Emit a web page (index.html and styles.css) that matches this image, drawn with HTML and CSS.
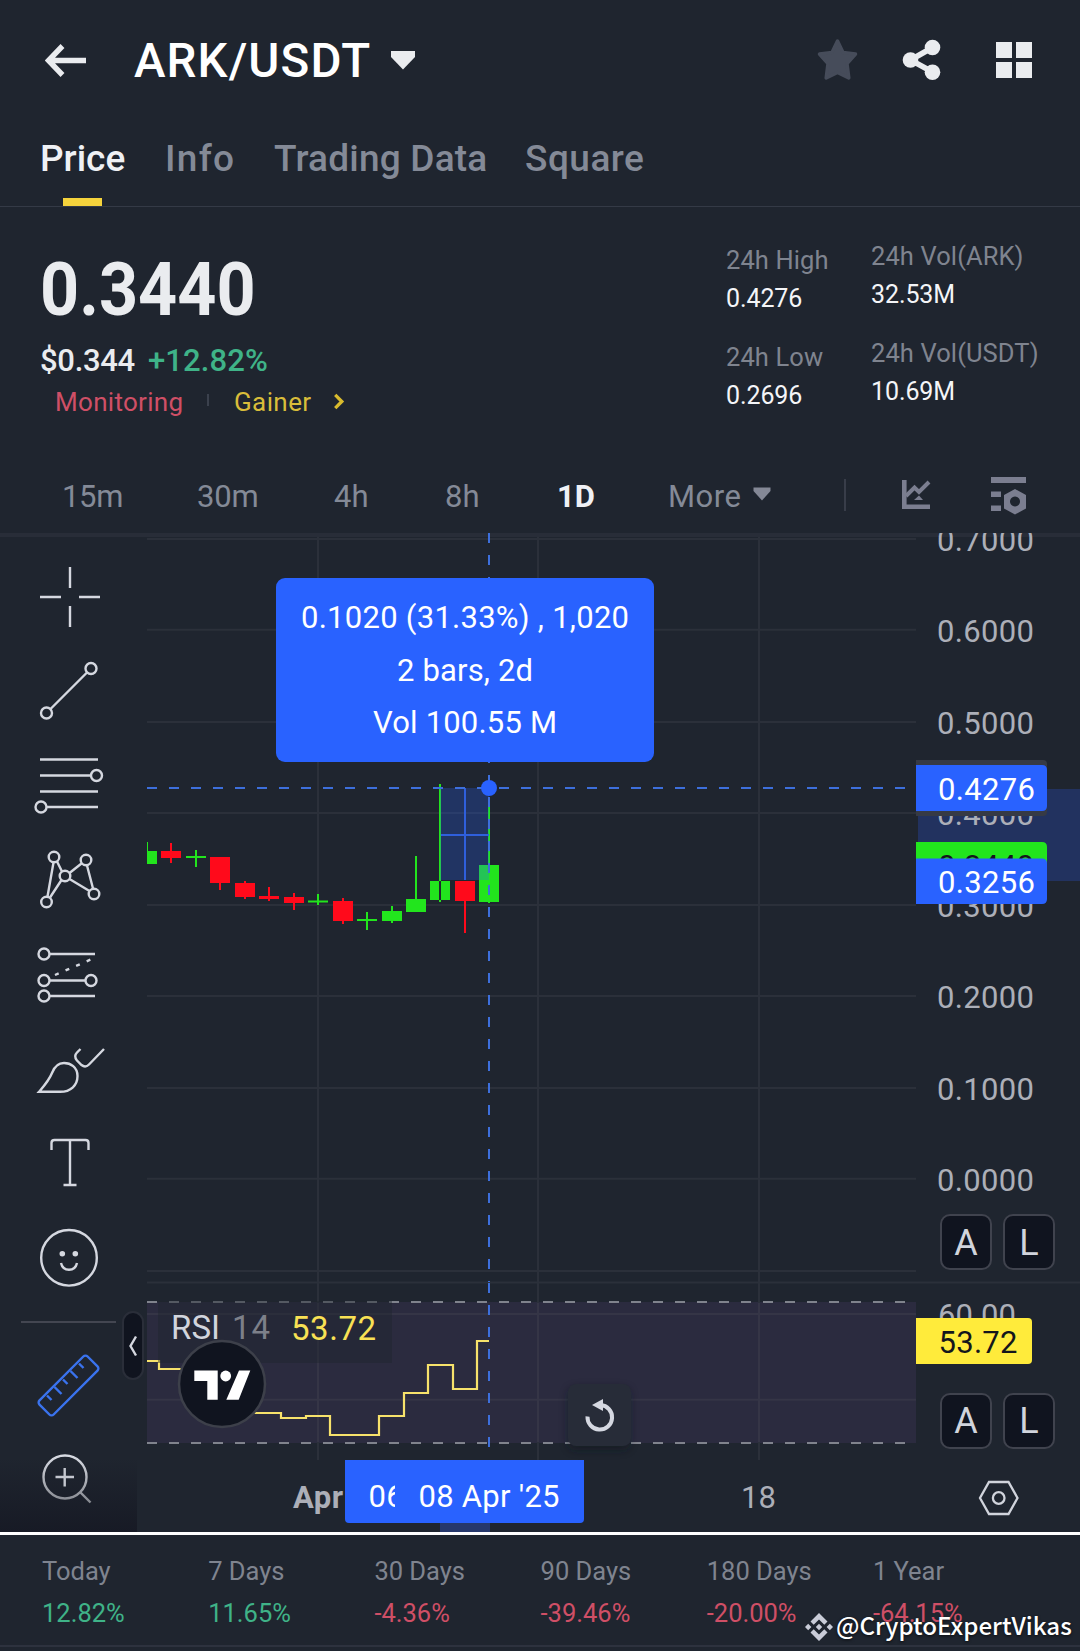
FILE: index.html
```html
<!DOCTYPE html>
<html lang="en">
<head>
<meta charset="utf-8">
<title>ARK/USDT</title>
<link rel="stylesheet" href="styles.css">
</head>
<body>
<div class="app">
  <header class="header">
    <svg class="back" width="42" height="36" viewBox="45 43 42 36"><path d="M86 61.500H50M62.500 47L48.500 61.500l14 14.500" fill="none" stroke="#eaecef" stroke-width="5.400"/></svg>
    <h1 class="pair">ARK/USDT</h1>
    <svg class="pair-caret" width="26" height="20" viewBox="0 0 26 20"><path d="M1 1h24v6L13 19.500 1 7z" fill="#eaecef"/></svg>
    <svg class="star" width="42" height="44" viewBox="816 40 42 44"><path d="M837.500 43l5.500 11.500 12.500 1.500-8.500 9.500 1.800 14.500-11.300-5.500-11.300 5.500 1.800-14.500-8.500-9.500 12.500-1.500z" fill="#464c5a" stroke="#464c5a" stroke-width="3.500" stroke-linejoin="round"/></svg>
    <svg class="share" width="40" height="44" viewBox="901 40 40 44"><path d="M932.500 49.500L910.500 62l22 12" fill="none" stroke="#eaecef" stroke-width="5.500"/><circle cx="932.500" cy="49.500" r="7.800"/><circle cx="910.500" cy="62" r="7.800"/><circle cx="932.500" cy="74.300" r="7.800"/></svg>
    <svg class="grid-icon" width="38" height="38" viewBox="0 0 38 38"><path d="M1 1h16v16H1zM21 1h16v16H21zM1 21h16v16H1zM21 21h16v16H21z"/></svg>
  </header>

  <nav class="tabs">
    <a class="tab tab-active">Price</a>
    <a class="tab tab-info">Info</a>
    <a class="tab tab-trading">Trading Data</a>
    <a class="tab tab-square">Square</a>
  </nav>

  <section class="summary">
    <div class="quote">
      <div class="last"><span class="last-value">0.3440</span></div>
      <div class="change"><span class="fiat">$0.344</span><span class="pct">+12.82%</span></div>
      <div class="tags"><span class="tag-monitoring">Monitoring</span><i class="tag-sep"></i><span class="tag-gainer">Gainer</span>
        <svg width="12" height="17" viewBox="0 0 12 18"><path d="M2 2l7 7-7 7" fill="none" stroke="#d9bb2e" stroke-width="3.500"/></svg></div>
    </div>
    <dl class="stats stats-range">
      <dt>24h High</dt><dd>0.4276</dd>
      <dt>24h Low</dt><dd>0.2696</dd>
    </dl>
    <dl class="stats stats-volume">
      <dt>24h Vol(ARK)</dt><dd>32.53M</dd>
      <dt>24h Vol(USDT)</dt><dd>10.69M</dd>
    </dl>
  </section>

  <nav class="intervals">
    <span class="iv iv-15m">15m</span>
    <span class="iv iv-30m">30m</span>
    <span class="iv iv-4h">4h</span>
    <span class="iv iv-8h">8h</span>
    <span class="iv iv-1d">1D</span>
    <span class="iv iv-more">More</span>
    <svg class="more-caret" width="18" height="14" viewBox="0 0 18 14"><path d="M.500.500h17V4L9 13.500.500 4z" fill="#848896"/></svg>
    <i class="iv-sep"></i>
    <svg class="iv-line" width="30" height="32" viewBox="901 487 30 32"><path d="M904.300 488v26.700H930" fill="none" stroke="#7b7e90" stroke-width="4.600"/><path d="M906 504l8.500-8.500 4.500 4.500 10-10" fill="none" stroke="#7b7e90" stroke-width="4"/><path d="M914 508l5-4.500 4 4.500z" fill="#7b7e90"/></svg>
    <svg class="iv-settings" width="38" height="40" viewBox="990 483 38 40"><path d="M991 485h35v6h-35zM991 499.500h10v5.500h-10zM991 513.500h10v5.500h-10z" fill="#7b7e90"/><path fill-rule="evenodd" d="M1015 497l11 6v13.500l-11 6-11-6V503zM1015 504.500a5 5 0 1 0 .01 0z" fill="#7b7e90"/></svg>
  </nav>

  <main class="workspace">
    <aside class="tools">
      <svg width="140" height="108" viewBox="0 537 140 108"><path d="M40 597h21M79 597h21M70 567v21M70 606v21"/></svg>
      <svg width="140" height="90" viewBox="0 645 140 90"><circle cx="91" cy="668.500" r="5.500"/><circle cx="46.500" cy="713" r="5.500"/><path d="M50.500 709l36.500-36.500"/></svg>
      <svg width="140" height="95" viewBox="0 735 140 95"><path d="M40 759.500h58M40 775.500h51M40 791.500h58M47 807h51"/><circle cx="96.500" cy="775.500" r="5.500"/><circle cx="41" cy="807" r="5.500"/></svg>
      <svg width="140" height="95" viewBox="0 830 140 95"><circle cx="54" cy="857" r="5.300"/><circle cx="86" cy="860" r="5.300"/><circle cx="65" cy="876" r="5.300"/><circle cx="46.500" cy="902" r="5.300"/><circle cx="94" cy="894" r="5.300"/><path d="M53.500 862.500l-6 34M57 861.500l5 10M69.500 873l12-9.500M87 865.500l6 23M69.500 879l20 12M61.500 880l-11.500 17.500"/></svg>
      <svg width="140" height="95" viewBox="0 925 140 95"><circle cx="44" cy="954" r="5.500"/><circle cx="44" cy="980.500" r="5.500"/><circle cx="91" cy="980.500" r="5.500"/><circle cx="44" cy="996" r="5.500"/><path d="M50 954h45M50 980.500h35M50 996h45"/><path d="M55 975l37-16" stroke-dasharray="4 7.500"/></svg>
      <svg width="140" height="95" viewBox="0 1020 140 95"><path d="M39 1091.800H60C71 1091.800 77.500 1085 77.500 1076S70.500 1063 64 1063c-6 0-9.500 3.500-12 10-3 7.500-8 13-13 18.800zM80.500 1049l-3.500 3.500c-2.500 2.500-2 5.500 0 8l4.500 4.500c2.500 2 5.500 1.500 7.500-.5L104 1049"/></svg>
      <svg width="140" height="95" viewBox="0 1115 140 95"><path d="M51.500 1150v-7q0-3 3-3h31q3 0 3 3v7M70 1140v45M63.500 1185h13"/></svg>
      <svg width="140" height="98" viewBox="0 1210 140 98"><circle cx="69" cy="1257.800" r="27.800"/><path d="M61 1263c2 9 14 9 16 0"/><g class="eyes"><circle cx="62.300" cy="1253.700" r="2.800"/><circle cx="75.300" cy="1253.700" r="2.800"/></g></svg>
      <hr class="tools-rule">
      <svg class="ruler" width="140" height="117" viewBox="0 1323 140 117"><rect x="34.500" y="1375.500" width="68" height="20" rx="3" transform="rotate(-45 68.500 1385.500)"/><path d="M47 1395.500l4.500 4.500M54.500 1387l7 7M63 1379.500l4.500 4.500M70.500 1371l7 7M79 1363.500l4.500 4.500"/></svg>
      <svg class="zoom-in" width="140" height="93" viewBox="0 1440 140 93"><defs><linearGradient id="fade" gradientUnits="userSpaceOnUse" x1="0" y1="1455" x2="0" y2="1503"><stop offset="0" stop-color="#d9dce4"/><stop offset="1" stop-color="#85888f"/></linearGradient></defs><g stroke="url(#fade)"><circle cx="65" cy="1477" r="21.500"/><path d="M80 1492l10.500 10.500"/></g><path d="M55.500 1477h18.500M64.700 1468v18.500" stroke="#c4c7cf"/></svg>
      <div class="drawer"><svg width="12" height="24" viewBox="0 0 12 24"><path d="M9 2.500L3.500 12 9 21.500"/></svg></div>
    </aside>

    <svg class="chart" width="940" height="1000" viewBox="140 533 940 1000">
      <defs>
        <clipPath id="tick06"><rect x="345" y="1460" width="50" height="63"/></clipPath>
        <filter id="soft" x="-30%" y="-30%" width="160%" height="160%"><feGaussianBlur stdDeviation="4"/></filter>
      </defs>
      <rect x="147" y="1302" width="769" height="141" fill="#2b2b3f"/>
      <g class="grid">
        <path d="M147 539h769M147 629.700h769M147 722h769M147 813h769M147 905h769M147 996h769M147 1088h769M147 1178.700h769M147 1271h769"/>
        <path d="M318 537v923M538 537v923M759 537v923"/>
        <path d="M147 1282.500h933"/>
        <path class="band-grid" d="M147 1314h769M147 1399.700h769M318 1303v139M538 1303v139M759 1303v139"/>
      </g>

      <g class="up">
        <path d="M147 842h1v9h9v13h-10z"/>
        <path d="M186 856h20v2h-20zM195 850h2v17h-2zM308 900.500h20v2h-20zM317 894h2v11h-2zM357 919h20v2h-20zM366 912h2v18h-2zM382 911h20v10h-20zM391 906h2v17h-2zM406 899h20v13h-20zM415 856h2v43h-2zM430 881h20v19h-20zM439 902h2v-118h-2zM479 865h20v37h-20zM488 806h2v97h-2z"/>
      </g>
      <g class="down">
        <path d="M161 851h20v7h-20zM170 843h2v20h-2zM210 857h20v26h-20zM219 883h2v7h-2zM235 883h20v14h-20zM244 881h2v18h-2zM259 896h20v3h-20zM268 887h2v14h-2zM284 897h20v6h-20zM293 893h2v17h-2zM333 901h20v20h-20zM342 898h2v26h-2zM455 881h20v20h-20zM464 901h2v32h-2z"/>
      </g>
      <rect x="440" y="788" width="49" height="92" fill="#2962ff" fill-opacity=".25"/>
      <path d="M465 788v92M441 835h48" stroke="#2f5fdc" stroke-width="2"/>
      <path d="M147 788h762M489 533v749M489 1283v165" class="cross"/>
      <circle cx="489" cy="788" r="8" fill="#2962ff"/>

      <rect x="276" y="578" width="378" height="184" rx="9" fill="#2962ff"/>
      <g class="tip">
        <text x="301" y="628" textLength="328">0.1020 (31.33%) , 1,020</text>
        <text x="397" y="681" textLength="136">2 bars, 2d</text>
        <text x="373" y="733" textLength="184">Vol 100.55 M</text>
      </g>

      <path d="M147 1302h762M147 1443h762" class="band-edge"/>
      <path d="M147 1361h12v8h25v31h48v13h49v5h25v-2h24v19h49v-19h25v-23h24v-28h25v24h24v-48h12" fill="none" stroke="#f7e26b" stroke-width="2.200"/>
      <rect x="158" y="1301" width="234" height="62" fill="#1f252f" fill-opacity=".45"/>
      <g class="legend">
        <text x="171" y="1339" textLength="49" fill="#d1d4dc">RSI</text>
        <text x="232" y="1339" textLength="38" fill="#7d808a">14</text>
        <text x="291" y="1340" textLength="85" fill="#f9e154">53.72</text>
      </g>
      <circle cx="222" cy="1384" r="43" fill="#10141f" stroke="#3d404a" stroke-width="2.500"/>
      <path d="M194.300 1370.500h23.400v29.200h-10.400v-18.700h-13zM239 1370.500h11.300l-11.600 29.200h-12.400z" fill="#fff"/>
      <circle cx="225.700" cy="1376" r="5.400" fill="#fff"/>
      <rect x="568" y="1388" width="62" height="62" rx="8" fill="#10141f" opacity=".5" filter="url(#soft)"/>
      <rect x="568" y="1384" width="63" height="62" rx="8" fill="#272c38"/>
      <path d="M587.500 1416.500a12.300 12.300 0 1 0 13-11.500" fill="none" stroke="#d5d8e1" stroke-width="4"/>
      <path d="M592 1405l11-6v12z" fill="#d5d8e1"/>

      <g class="axis">
        <text x="937" y="551" textLength="97">0.7000</text>
        <text x="937" y="642" textLength="97">0.6000</text>
        <text x="937" y="733.500" textLength="97">0.5000</text>
        <rect x="918" y="789" width="162" height="92" fill="#22325f"/>
        <text x="937" y="825" textLength="97">0.4000</text>
        <text x="937" y="917" textLength="97">0.3000</text>
        <text x="937" y="1008" textLength="97">0.2000</text>
        <text x="937" y="1100" textLength="97">0.1000</text>
        <text x="937" y="1191" textLength="97">0.0000</text>
        <text x="938" y="1326" textLength="78">60.00</text>
        <text x="741" y="1508" textLength="35">18</text>
        <text x="293" y="1508" textLength="50" font-weight="700">Apr</text>
      </g>
      <path d="M916 760h127q4 0 4 4v48q0 4-4 4H916z" fill="#363a45"/>
      <path d="M916 765h126q5 0 5 5v36q0 5-5 5H916z" fill="#2962ff"/>
      <path d="M916 842h126q5 0 5 5v36H916z" fill="#22e51d"/>
      <text x="938" y="877" textLength="96" class="tag-text dark">0.3440</text>
      <path d="M916 858.500h126q5 0 5 5v35.500q0 5-5 5H916z" fill="#2962ff"/>
      <text x="938" y="800" textLength="97" class="tag-text">0.4276</text>
      <text x="938" y="893" textLength="97" class="tag-text">0.3256</text>
      <path d="M916 1318h112q4 0 4 4v38q0 4-4 4H916z" fill="#ffeb3b"/>
      <text x="938.500" y="1353" textLength="79" class="tag-text dark">53.72</text>

      <path d="M440 1520h50v13h-50z" fill="#26386c"/>
      <path d="M345 1460h239v59q0 4-4 4H349q-4 0-4-4z" fill="#2962ff"/>
      <g clip-path="url(#tick06)"><text x="368.500" y="1507" textLength="141" class="tag-text">06 Apr '25</text></g>
      <text x="418.500" y="1507" textLength="141" class="tag-text">08 Apr '25</text>

      <g class="scale-btn">
        <rect x="941" y="1215" width="50" height="54" rx="9"/><rect x="1004" y="1215" width="50" height="54" rx="9"/>
        <rect x="941" y="1394" width="50" height="54" rx="9"/><rect x="1004" y="1394" width="50" height="54" rx="9"/>
        <text x="966" y="1255">A</text><text x="1029" y="1255">L</text>
        <text x="966" y="1433">A</text><text x="1029" y="1433">L</text>
      </g>
      <path d="M989 1482h19.500l9 16-9 16H989l-9-16z" fill="none" stroke="#d1d4dc" stroke-width="2.300"/>
      <circle cx="998.700" cy="1498" r="5.800" fill="none" stroke="#d1d4dc" stroke-width="2.300"/>
    </svg>
  </main>

  <footer class="returns">
    <div class="ret"><span>Today</span><b class="gain">12.82%</b></div>
    <div class="ret"><span>7 Days</span><b class="gain">11.65%</b></div>
    <div class="ret"><span>30 Days</span><b>-4.36%</b></div>
    <div class="ret"><span>90 Days</span><b>-39.46%</b></div>
    <div class="ret"><span>180 Days</span><b>-20.00%</b></div>
    <div class="ret"><span>1 Year</span><b>-64.15%</b></div>
    <div class="credit">
      <svg width="28" height="28" viewBox="0 0 28 28"><path d="M14 0l8.500 8.500-3.200 3.200L14 6.400l-5.300 5.300-3.200-3.200zM14 28l8.500-8.500-3.200-3.200L14 21.600l-5.300-5.300-3.200 3.200zM3.200 10.800L6.400 14l-3.200 3.200L0 14zM24.800 10.800L28 14l-3.200 3.200-3.200-3.200zM14 10.800l3.200 3.200-3.200 3.200-3.200-3.200z" fill="#c9ccd8"/></svg>
      <span>@CryptoExpertVikas</span>
    </div>
  </footer>
</div>
</body>
</html>
```
FILE: styles.css
```css
* { box-sizing: border-box; margin: 0; padding: 0; }
body { background: #1f252f; color: #eaecef; font-family: Roboto, "Liberation Sans", sans-serif; }
svg { display: block; flex: none; }
.app { width: 1080px; height: 1651px; overflow: hidden; background: #1f252f; }

.header { display: flex; align-items: center; height: 119px; padding-left: 45px; }
.header svg { fill: #eaecef; }
.pair { margin: 2px 0 0 47px; width: 256px; font-size: 47.500px; font-weight: 500; line-height: 56px; letter-spacing: 1.1px; color: #fff; white-space: nowrap; }
.star { margin-left: 400px; }
.share { margin-left: 43px; }
.grid-icon { margin-left: 54px; }

.tabs { display: flex; height: 88px; padding-left: 40px; border-bottom: 1px solid #343a46; }
.tab { position: relative; padding-top: 19px; line-height: 42px; font-size: 37px; font-weight: 500; color: #848a97; white-space: nowrap; }
.tab-active { width: 125px; color: #eff1f5; }
.tab-active::after { content: ""; position: absolute; left: 23px; bottom: 0; width: 39px; height: 8px; background: #f5d33c; }
.tab-info { width: 109px; letter-spacing: 1.3px; }
.tab-trading { width: 251px; letter-spacing: .2px; }
.tab-square { letter-spacing: .5px; }

.summary { display: flex; height: 258px; padding-top: 42px; }
.quote { width: 727px; padding-left: 40px; }
.last { height: 80px; line-height: 80px; font-size: 75px; font-weight: 700; }
.last-value { display: inline-block; transform: scaleX(.91); transform-origin: left; }
.change { display: flex; margin-top: 13px; height: 38px; line-height: 38px; font-size: 31px; font-weight: 500; }
.fiat { width: 108px; letter-spacing: -.3px; }
.pct { letter-spacing: .1px; color: #3fb388; }
.tags { display: flex; align-items: center; height: 32px; margin-top: 6px; padding-left: 15px; font-size: 26px; line-height: 32px; }
.tags svg { margin-top: -2px; }
.tag-monitoring { width: 152px; letter-spacing: .3px; color: #cf4f66; }
.tag-sep { width: 2px; height: 12px; margin: -4px 25px 0 0; background: #3b414d; }
.tag-gainer { width: 99px; letter-spacing: .4px; color: #d9bd3a; }

.stats { font-size: 25.500px; line-height: 30px; white-space: nowrap; }
.stats dt { letter-spacing: .1px; color: #7f848f; }
.stats dd { margin: 9px 0 28px; font-size: 25px; letter-spacing: -.1px; color: #f4f5f8; }
.stats-range { width: 145px; margin: -4px 0 0 -1px; }
.stats-volume { margin-top: -8px; }

.intervals { display: flex; align-items: center; height: 68px; padding: 0 0 6px 62px; color: #848a97; font-size: 31px; line-height: 36px; }
.iv { padding-top: 2px; }
.iv-15m { width: 135px; letter-spacing: -.3px; }
.iv-30m { width: 137px; letter-spacing: -.2px; }
.iv-4h { width: 111px; }
.iv-8h { width: 112px; }
.iv-1d { width: 111px; font-weight: 700; color: #eff1f5; }
.iv-more { width: 85px; letter-spacing: .5px; }
.more-caret { margin-top: -4px; }
.iv-sep { width: 2px; height: 32px; margin: -3px 55px 0 73px; background: #383d49; }
.iv-line { margin-top: -3px; }
.iv-settings { margin: -3px 0 0 59px; }

.workspace { position: relative; display: flex; height: 1000px; }
.workspace::before { content: ""; position: absolute; left: 0; top: 0; width: 1080px; height: 4px; background: #282d38; }
.tools { position: relative; z-index: 1; width: 140px; padding-top: 4px; }
.tools svg { position: relative; fill: none; stroke: #d5d8e0; stroke-width: 2.4px; }
.tools .eyes { fill: #d5d8e0; stroke: none; }
.tools::before { content: ""; position: absolute; left: 0; bottom: 0; width: 137px; height: 75px; background: linear-gradient(to bottom, rgba(23, 26, 37, 0), #171a25); }
.tools-rule { height: 2px; margin: 13px 24px 0 21px; border: 0; background: #434651; }
.tools .ruler { stroke: #3a73ee; }
.drawer { position: absolute; left: 122px; top: 778px; display: flex; align-items: center; justify-content: center; width: 22px; height: 69px; border: 2px solid #2a2e39; border-radius: 11px; background: #10141f; }

.chart { position: relative; font-size: 31px; }
.grid path { fill: none; stroke: #2b303a; stroke-width: 2px; }
.grid .band-grid { stroke: #353546; }
.up { fill: #22e51d; }
.down { fill: #ff0a1b; }
.cross { fill: none; stroke: #3d6fdc; stroke-width: 2px; stroke-dasharray: 10 12; }
.band-edge { stroke: #80838d; stroke-width: 2px; stroke-dasharray: 10 12; }
.tip { fill: #fff; }
.legend { font-size: 33px; }
.axis { fill: #acafb8; }
.tag-text { fill: #fff; }
.tag-text.dark { fill: #14161c; }
.scale-btn rect { fill: #10141f; stroke: #40434e; stroke-width: 2px; }
.scale-btn text { fill: #d1d4dc; font-size: 36px; text-anchor: middle; }

.returns { position: relative; z-index: 2; display: grid; grid-template-columns: repeat(6, 166.200px); height: 118px; margin-top: -1px; padding: 21px 0 0 42px; border-top: 3px solid #fff; }
.returns::after { content: ""; position: absolute; left: 0; top: 110px; width: 1080px; height: 2px; background: #2d323e; }
.ret { display: flex; flex-direction: column; font-size: 25.500px; line-height: 30px; white-space: nowrap; }
.ret span { color: #7f848f; }
.ret b { margin-top: 12px; font-weight: 400; color: #cf4f66; }
.ret .gain { color: #3fb388; }
.credit { position: absolute; z-index: 1; left: 805px; top: 70px; display: flex; align-items: center; gap: 3px; font: 500 24.100px/40px "Noto Sans CJK SC", sans-serif; color: #fff; text-shadow: 0 1px 3px rgba(0, 0, 0, .7); }
.credit svg { margin-top: 3px; }
```
